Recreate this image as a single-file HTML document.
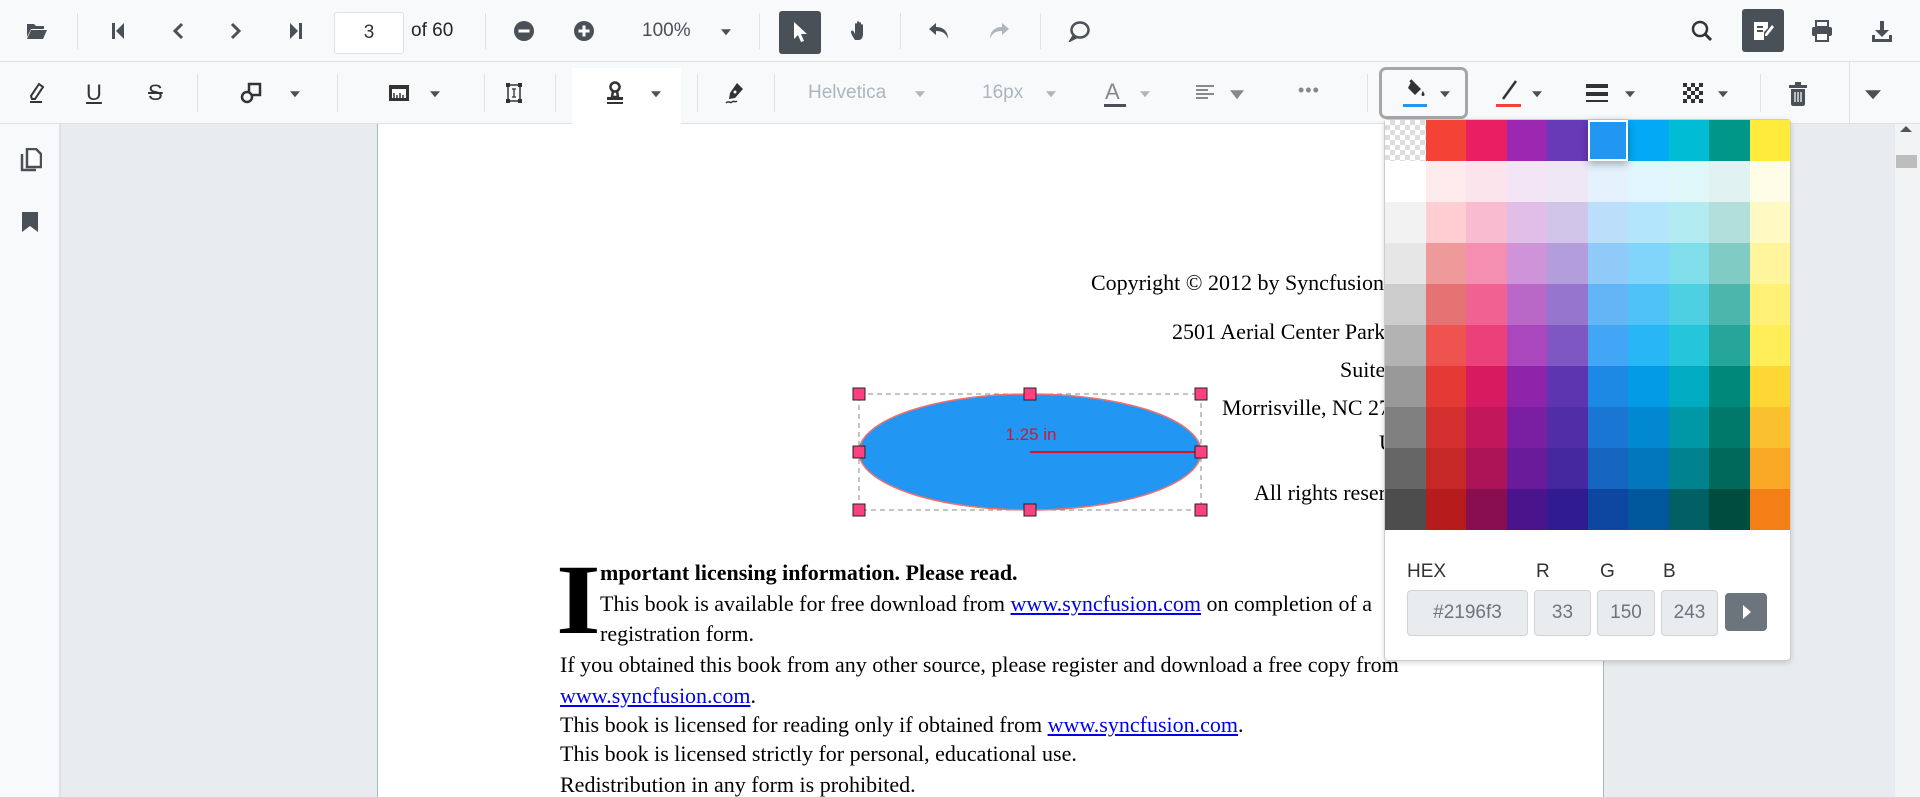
<!DOCTYPE html>
<html><head><meta charset="utf-8"><style>
*{margin:0;padding:0;box-sizing:border-box}
body{width:1920px;height:797px;overflow:hidden;background:#e9ecef;font-family:"Liberation Sans",sans-serif;position:relative}
.abs{position:absolute}
.tb{position:absolute;left:0;width:1920px;background:#f8f9fa;border-bottom:1px solid #dee2e6}
.sep{position:absolute;width:1px;background:#dee2e6}
.ic{position:absolute;transform:translate(-50%,-50%)}
.car{position:absolute;width:0;height:0;border-left:5px solid transparent;border-right:5px solid transparent;border-top:6px solid #495057;transform:translate(-50%,-30%)}
.car.l{border-top-color:#adb5bd}
.doc{position:absolute;font-family:"Liberation Serif",serif;font-size:22px;color:#000;white-space:nowrap;line-height:1}
a{color:#0000ee;text-decoration:underline}
.h{position:absolute;width:13px;height:13px;background:#ff4081;border:1.5px solid #222;transform:translate(-50%,-50%)}
.pal{position:absolute;left:1385px;top:120px;display:grid;grid-template-columns:repeat(10,40.5px);grid-auto-rows:41px}
.inp{position:absolute;top:590px;height:46px;background:#e9ecef;border:1.5px solid #ced4da;border-radius:4px;color:#6c757d;font-size:19px;text-align:center;line-height:43px}
.lab{position:absolute;top:558px;font-size:19px;color:#333}
</style></head><body>

<!-- toolbar 1 -->
<div class="tb" style="top:0;height:62px"></div>
<div class="sep" style="left:77px;top:13px;height:36px"></div>
<div class="sep" style="left:485px;top:13px;height:36px"></div>
<div class="sep" style="left:759px;top:13px;height:36px"></div>
<div class="sep" style="left:900px;top:13px;height:36px"></div>
<div class="sep" style="left:1040px;top:13px;height:36px"></div>

<svg class="ic" style="left:37px;top:31px" width="22" height="18" viewBox="0 0 22 18"><path d="M1 2h7l2 2h8v3H5L1 15z" fill="#495057"/><path d="M5 8h16l-4 9H1z" fill="#495057"/></svg>
<svg class="ic" style="left:118px;top:31px" width="14" height="18" viewBox="0 0 14 18"><rect x="1" y="1" width="3" height="16" fill="#495057"/><path d="M13 1v16L5 9z" fill="#495057"/></svg>
<svg class="ic" style="left:178px;top:31px" width="12" height="18" viewBox="0 0 12 18"><path d="M10 2L3 9l7 7" stroke="#495057" stroke-width="3" fill="none"/></svg>
<svg class="ic" style="left:236px;top:31px" width="12" height="18" viewBox="0 0 12 18"><path d="M2 2l7 7-7 7" stroke="#495057" stroke-width="3" fill="none"/></svg>
<svg class="ic" style="left:296px;top:31px" width="14" height="18" viewBox="0 0 14 18"><path d="M1 1v16l8-8z" fill="#495057"/><rect x="10" y="1" width="3" height="16" fill="#495057"/></svg>
<div class="abs" style="left:334px;top:12px;width:70px;height:42px;background:#fff;border:1px solid #dee2e6;border-radius:3px;text-align:center;line-height:40px;font-size:19px;color:#333">3</div>
<div class="abs" style="left:411px;top:20px;font-size:19px;color:#212529">of 60</div>
<svg class="ic" style="left:524px;top:31px" width="22" height="22"><circle cx="11" cy="11" r="10" fill="#495057"/><rect x="5.5" y="9.5" width="11" height="3" fill="#fff"/></svg>
<svg class="ic" style="left:584px;top:31px" width="22" height="22"><circle cx="11" cy="11" r="10" fill="#495057"/><rect x="5.5" y="9.5" width="11" height="3" fill="#fff"/><rect x="9.5" y="5.5" width="3" height="11" fill="#fff"/></svg>
<div class="abs" style="left:642px;top:20px;font-size:19px;color:#495057">100%</div>
<div class="car" style="left:726px;top:31px"></div>
<div class="abs" style="left:779px;top:11px;width:42px;height:43px;background:#495057;border-radius:3px"></div>
<svg class="ic" style="left:800px;top:32px" width="16" height="22" viewBox="0 0 16 22"><path d="M2 1v17l4-4 3 7 3-1-3-7h6z" fill="#fff"/></svg>
<svg class="ic" style="left:861px;top:31px" width="20" height="22" viewBox="0 0 20 22"><path d="M4 20c-2-3-4-6-4-8s2-2 3 0l1 2V4c0-1 2-1 2 0v7V2c0-1 2-1 2 0v9V3c0-1 2-1 2 0v8V5c0-1 2-1 2 0v9c0 4-2 6-4 6z" fill="#495057"/></svg>
<svg class="ic" style="left:939px;top:31px" width="22" height="18" viewBox="0 0 22 18"><path d="M8 1L1 7l7 6V9c6 0 10 2 12 8 0-7-4-12-12-12z" fill="#495057"/></svg>
<svg class="ic" style="left:999px;top:31px" width="22" height="18" viewBox="0 0 22 18"><path d="M14 1l7 6-7 6V9C8 9 4 11 2 17c0-7 4-12 12-12z" fill="#adb5bd"/></svg>
<svg class="ic" style="left:1079px;top:31px" width="22" height="22" viewBox="0 0 22 22"><ellipse cx="12" cy="10" rx="8.5" ry="7.5" stroke="#495057" stroke-width="2.5" fill="none"/><path d="M6 15l-3 5 6-3" stroke="#495057" stroke-width="2.5" fill="none"/></svg>
<svg class="ic" style="left:1702px;top:31px" width="22" height="22" viewBox="0 0 22 22"><circle cx="9" cy="9" r="7" stroke="#333" stroke-width="2.5" fill="none"/><path d="M14 14l6 6" stroke="#333" stroke-width="3"/></svg>
<div class="abs" style="left:1742px;top:9px;width:42px;height:43px;background:#495057;border-radius:3px"></div>
<svg class="ic" style="left:1763px;top:31px" width="22" height="22" viewBox="0 0 22 22"><path d="M2 2h14v6l-4 4v8H2z" fill="#fff"/><rect x="5" y="6" width="6" height="2" fill="#495057"/><rect x="5" y="10" width="6" height="2" fill="#495057"/><path d="M13 14l7-9 2 2-7 9h-2z" fill="#fff"/></svg>
<svg class="ic" style="left:1822px;top:31px" width="22" height="22" viewBox="0 0 22 22"><rect x="5" y="1" width="12" height="6" stroke="#495057" stroke-width="2" fill="none"/><rect x="1" y="7" width="20" height="9" rx="2" fill="#495057"/><rect x="5" y="13" width="12" height="8" fill="#fff" stroke="#495057" stroke-width="2"/></svg>
<svg class="ic" style="left:1882px;top:31px" width="22" height="22" viewBox="0 0 22 22"><rect x="9" y="1" width="4" height="10" fill="#495057"/><path d="M4 10h14l-7 7z" fill="#495057"/><rect x="1" y="19" width="20" height="3" fill="#495057"/><rect x="1" y="15" width="3" height="6" fill="#495057"/><rect x="18" y="15" width="3" height="6" fill="#495057"/></svg>

<!-- toolbar 2 -->
<div class="tb" style="top:62px;height:62px"></div>
<div class="sep" style="left:197px;top:74px;height:38px"></div>
<div class="sep" style="left:337px;top:74px;height:38px"></div>
<div class="sep" style="left:484px;top:74px;height:38px"></div>
<div class="sep" style="left:555px;top:74px;height:38px"></div>
<div class="sep" style="left:697px;top:74px;height:38px"></div>
<div class="sep" style="left:774px;top:74px;height:38px"></div>
<div class="sep" style="left:1367px;top:74px;height:38px"></div>
<div class="sep" style="left:1760px;top:74px;height:38px"></div>
<div class="sep" style="left:1849px;top:62px;height:62px"></div>
<div class="abs" style="left:572px;top:68px;width:109px;height:56px;background:#fff"></div>

<svg class="ic" style="left:37px;top:93px" width="16" height="22" viewBox="0 0 16 22"><path d="M10 2l4 3-8 12H3l-1-3z" stroke="#333" stroke-width="2" fill="none"/><rect x="1" y="19" width="12" height="2" fill="#333"/></svg>
<div class="abs" style="left:86px;top:80px;font-size:22px;color:#333;text-decoration:underline">U</div>
<div class="abs" style="left:148px;top:80px;font-size:22px;color:#333;text-decoration:line-through">S</div>
<svg class="ic" style="left:251px;top:93px" width="22" height="22" viewBox="0 0 22 22"><rect x="9" y="2" width="11" height="11" stroke="#333" stroke-width="2.5" fill="none"/><circle cx="7" cy="15" r="5" stroke="#333" stroke-width="2.5" fill="#f8f9fa"/></svg>
<div class="car" style="left:295px;top:93px"></div>
<svg class="ic" style="left:399px;top:93px" width="22" height="18" viewBox="0 0 22 18"><rect x="1" y="1" width="20" height="16" fill="#333"/><rect x="4" y="5" width="14" height="9" fill="#fff"/><path d="M6 14V9M9 14v-3M12 14V9M15 14v-3" stroke="#333" stroke-width="1.5"/></svg>
<div class="car" style="left:435px;top:93px"></div>
<svg class="ic" style="left:514px;top:93px" width="18" height="22" viewBox="0 0 18 22"><rect x="3" y="3" width="12" height="16" stroke="#333" stroke-width="1.5" fill="none"/><rect x="1" y="1" width="4" height="4" fill="#333"/><rect x="13" y="1" width="4" height="4" fill="#333"/><rect x="1" y="17" width="4" height="4" fill="#333"/><rect x="13" y="17" width="4" height="4" fill="#333"/><path d="M7 7h4M9 7v8M7 15h4" stroke="#333" stroke-width="1.3"/></svg>
<svg class="ic" style="left:615px;top:93px" width="20" height="24" viewBox="0 0 20 24"><circle cx="10" cy="6" r="4.5" stroke="#333" stroke-width="2.5" fill="none"/><path d="M8 10l-1 6h6l-1-6" stroke="#333" stroke-width="2.5" fill="none"/><rect x="2" y="16" width="16" height="3" fill="#333"/><rect x="2" y="21" width="16" height="2" fill="#333"/></svg>
<div class="car" style="left:656px;top:93px"></div>
<svg class="ic" style="left:735px;top:93px" width="24" height="24" viewBox="0 0 24 24"><path d="M14 2l6 6-8 9-6 1 1-6z" fill="#333"/><circle cx="12" cy="11" r="1.5" fill="#fff"/><path d="M3 22c3-3 4 1 6-1s3 1 5-1" stroke="#333" stroke-width="1.5" fill="none"/></svg>
<div class="abs" style="left:808px;top:82px;font-size:19px;color:#adb5bd">Helvetica</div>
<div class="car l" style="left:920px;top:93px"></div>
<div class="abs" style="left:982px;top:82px;font-size:19px;color:#adb5bd">16px</div>
<div class="car l" style="left:1051px;top:93px"></div>
<div class="abs" style="left:1105px;top:79px;font-size:22px;color:#888">A</div>
<div class="abs" style="left:1104px;top:104px;width:22px;height:3px;background:#495057"></div>
<div class="car l" style="left:1145px;top:93px"></div>
<svg class="ic" style="left:1205px;top:93px" width="18" height="18" viewBox="0 0 18 18"><path d="M0 2h18M0 6h12M0 10h18M0 14h12" stroke="#888" stroke-width="2"/></svg>
<div class="car" style="left:1237px;top:93px;border-top-color:#888;border-left-width:7px;border-right-width:7px;border-top-width:9px"></div>
<div class="abs" style="left:1298px;top:80px;font-size:18px;color:#888;letter-spacing:1px">•••</div>
<div class="abs" style="left:1379px;top:67px;width:89px;height:52px;border:3.5px solid #a6a6a6;border-radius:7px"></div>
<svg class="ic" style="left:1416px;top:89px" width="22" height="22" viewBox="0 0 22 22"><path d="M7 2l9 9-6 6-7-7z" fill="#333"/><path d="M5 4l2-2" stroke="#333" stroke-width="2"/><path d="M18 13c2 3 2 5 0 5s-2-2 0-5z" fill="#333"/></svg>
<div class="abs" style="left:1403px;top:104px;width:24px;height:3px;background:#2196f3"></div>
<div class="car" style="left:1445px;top:93px"></div>
<svg class="ic" style="left:1509px;top:90px" width="20" height="22" viewBox="0 0 20 22"><path d="M17 2L4 20" stroke="#333" stroke-width="2.5"/></svg>
<div class="abs" style="left:1496px;top:104px;width:25px;height:3px;background:#f44336"></div>
<div class="car" style="left:1537px;top:93px"></div>
<svg class="ic" style="left:1597px;top:93px" width="22" height="20" viewBox="0 0 22 20"><rect x="0" y="1" width="22" height="4" fill="#333"/><rect x="0" y="9" width="22" height="4" fill="#333"/><rect x="0" y="17" width="22" height="2" fill="#333"/></svg>
<div class="car" style="left:1630px;top:93px"></div>
<svg class="ic" style="left:1693px;top:93px" width="20" height="20" viewBox="0 0 20 20"><g fill="#333"><rect x="0" y="0" width="4" height="4"/><rect x="8" y="0" width="4" height="4"/><rect x="16" y="0" width="4" height="4"/><rect x="4" y="4" width="4" height="4"/><rect x="12" y="4" width="4" height="4"/><rect x="0" y="8" width="4" height="4"/><rect x="8" y="8" width="4" height="4"/><rect x="16" y="8" width="4" height="4"/><rect x="4" y="12" width="4" height="4"/><rect x="12" y="12" width="4" height="4"/><rect x="0" y="16" width="4" height="4"/><rect x="8" y="16" width="4" height="4"/><rect x="16" y="16" width="4" height="4"/></g></svg>
<div class="car" style="left:1723px;top:93px"></div>
<svg class="ic" style="left:1798px;top:94px" width="20" height="24" viewBox="0 0 20 24"><rect x="1" y="3" width="18" height="3" fill="#495057"/><rect x="7" y="0" width="6" height="3" fill="#495057"/><path d="M3 7h14v15c0 1-1 2-2 2H5c-1 0-2-1-2-2z" fill="#495057"/><path d="M7 10v10M10 10v10M13 10v10" stroke="#f8f9fa" stroke-width="1.3"/></svg>
<div class="car" style="left:1873px;top:93px;border-left-width:8px;border-right-width:8px;border-top-width:9px"></div>

<!-- sidebar -->
<div class="abs" style="left:0;top:124px;width:61px;height:673px;background:#f8f9fa;border-right:2px solid #dee2e6"></div>
<svg class="ic" style="left:31px;top:160px" width="22" height="24" viewBox="0 0 22 24"><path d="M7 1h9l5 5v13H7z" stroke="#495057" stroke-width="2.5" fill="#fff"/><path d="M2 6v16h14" stroke="#495057" stroke-width="2.5" fill="none"/></svg>
<svg class="ic" style="left:30px;top:222px" width="18" height="22" viewBox="0 0 18 22"><path d="M1 1h16v20l-8-6-8 6z" fill="#495057"/></svg>

<!-- page -->
<div class="abs" style="left:377px;top:124px;width:1227px;height:673px;background:#fff;border-left:1.5px solid #adb5bd;border-right:1.5px solid #adb5bd"></div>

<div class="doc" style="left:1091px;top:272px">Copyright © 2012 by Syncfusion Inc.</div>
<div class="doc" style="left:1172px;top:321px">2501 Aerial Center Parkway</div>
<div class="doc" style="left:1340px;top:359px">Suite 200</div>
<div class="doc" style="left:1222px;top:397px">Morrisville, NC 27560</div>
<div class="doc" style="left:1379px;top:432px">USA</div>
<div class="doc" style="left:1254px;top:482px">All rights reserved.</div>

<svg class="abs" style="left:850px;top:385px" width="360" height="135">
<rect x="9" y="9" width="342" height="116" stroke="#888" stroke-dasharray="5,4" fill="none"/>
<ellipse cx="180" cy="67" rx="171" ry="58" fill="#2196f3" stroke="#f07070" stroke-width="1.5"/>
<path d="M180 67H351" stroke="#e0102a" stroke-width="2"/>
<text x="181" y="55" font-family="Liberation Sans" font-size="17" fill="#e0102a" text-anchor="middle">1.25 in</text>
</svg>
<div class="h" style="left:859px;top:394px"></div><div class="h" style="left:1030px;top:394px"></div><div class="h" style="left:1201px;top:394px"></div>
<div class="h" style="left:859px;top:452px"></div><div class="h" style="left:1201px;top:452px"></div>
<div class="h" style="left:859px;top:510px"></div><div class="h" style="left:1030px;top:510px"></div><div class="h" style="left:1201px;top:510px"></div>

<div class="doc" style="left:556px;top:550px;font-size:100px;font-weight:bold;line-height:100px;transform:scaleX(1.15);transform-origin:left">I</div>
<div class="doc" style="left:600px;top:562px;font-weight:bold">mportant licensing information. Please read.</div>
<div class="doc" style="left:600px;top:593px">This book is available for free download from <a>www.syncfusion.com</a> on completion of a</div>
<div class="doc" style="left:600px;top:623px">registration form.</div>
<div class="doc" style="left:560px;top:654px">If you obtained this book from any other source, please register and download a free copy from</div>
<div class="doc" style="left:560px;top:685px"><a>www.syncfusion.com</a>.</div>
<div class="doc" style="left:560px;top:714px">This book is licensed for reading only if obtained from <a>www.syncfusion.com</a>.</div>
<div class="doc" style="left:560px;top:743px">This book is licensed strictly for personal, educational use.</div>
<div class="doc" style="left:560px;top:774px">Redistribution in any form is prohibited.</div>

<!-- scrollbar -->
<div class="abs" style="left:1894px;top:124px;width:26px;height:673px;background:#f1f3f5;border-left:1px solid #e5e7ea"></div>
<div class="abs" style="left:1900px;top:126px;width:0;height:0;border-left:6px solid transparent;border-right:6px solid transparent;border-bottom:6px solid #555"></div>
<div class="abs" style="left:1896px;top:155px;width:21px;height:13px;background:#bdbdbd"></div>

<!-- color popup -->
<div class="abs" style="left:1384px;top:119px;width:407px;height:542px;background:#fff;border:1.5px solid #ccc;border-radius:4px;box-shadow:0 2px 6px rgba(0,0,0,.15)"></div>
<div class="pal">
<div style="background:repeating-conic-gradient(#ddd 0 25%,#fff 0 50%) 0 0/10px 10px"></div><div style="background:#f44336"></div><div style="background:#e91e63"></div><div style="background:#9c27b0"></div><div style="background:#673ab7"></div><div style="background:#2196f3;border:2px solid #fff;box-shadow:0 3px 8px rgba(0,0,0,.3);position:relative;z-index:2"></div><div style="background:#03a9f4"></div><div style="background:#00bcd4"></div><div style="background:#009688"></div><div style="background:#ffeb3b"></div>
<div style="background:#ffffff"></div><div style="background:#ffebee"></div><div style="background:#fce4ec"></div><div style="background:#f3e5f5"></div><div style="background:#ede7f6"></div><div style="background:#e3f2fd"></div><div style="background:#e1f5fe"></div><div style="background:#e0f7fa"></div><div style="background:#e0f2f1"></div><div style="background:#fffde7"></div>
<div style="background:#f2f2f2"></div><div style="background:#ffcdd2"></div><div style="background:#f8bbd0"></div><div style="background:#e1bee7"></div><div style="background:#d1c4e9"></div><div style="background:#bbdefb"></div><div style="background:#b3e5fc"></div><div style="background:#b2ebf2"></div><div style="background:#b2dfdb"></div><div style="background:#fff9c4"></div>
<div style="background:#e6e6e6"></div><div style="background:#ef9a9a"></div><div style="background:#f48fb1"></div><div style="background:#ce93d8"></div><div style="background:#b39ddb"></div><div style="background:#90caf9"></div><div style="background:#81d4fa"></div><div style="background:#80deea"></div><div style="background:#80cbc4"></div><div style="background:#fff59d"></div>
<div style="background:#cccccc"></div><div style="background:#e57373"></div><div style="background:#f06292"></div><div style="background:#ba68c8"></div><div style="background:#9575cd"></div><div style="background:#64b5f6"></div><div style="background:#4fc3f7"></div><div style="background:#4dd0e1"></div><div style="background:#4db6ac"></div><div style="background:#fff176"></div>
<div style="background:#b3b3b3"></div><div style="background:#ef5350"></div><div style="background:#ec407a"></div><div style="background:#ab47bc"></div><div style="background:#7e57c2"></div><div style="background:#42a5f5"></div><div style="background:#29b6f6"></div><div style="background:#26c6da"></div><div style="background:#26a69a"></div><div style="background:#ffee58"></div>
<div style="background:#999999"></div><div style="background:#e53935"></div><div style="background:#d81b60"></div><div style="background:#8e24aa"></div><div style="background:#5e35b1"></div><div style="background:#1e88e5"></div><div style="background:#039be5"></div><div style="background:#00acc1"></div><div style="background:#00897b"></div><div style="background:#fdd835"></div>
<div style="background:#808080"></div><div style="background:#d32f2f"></div><div style="background:#c2185b"></div><div style="background:#7b1fa2"></div><div style="background:#512da8"></div><div style="background:#1976d2"></div><div style="background:#0288d1"></div><div style="background:#0097a7"></div><div style="background:#00796b"></div><div style="background:#fbc02d"></div>
<div style="background:#666666"></div><div style="background:#c62828"></div><div style="background:#ad1457"></div><div style="background:#6a1b9a"></div><div style="background:#4527a0"></div><div style="background:#1565c0"></div><div style="background:#0277bd"></div><div style="background:#00838f"></div><div style="background:#00695c"></div><div style="background:#f9a825"></div>
<div style="background:#4d4d4d"></div><div style="background:#b71c1c"></div><div style="background:#880e4f"></div><div style="background:#4a148c"></div><div style="background:#311b92"></div><div style="background:#0d47a1"></div><div style="background:#01579b"></div><div style="background:#006064"></div><div style="background:#004d40"></div><div style="background:#f57f17"></div>
</div>
<div class="lab" style="left:1407px;top:561px">HEX</div>
<div class="lab" style="left:1536px;top:561px">R</div>
<div class="lab" style="left:1600px;top:561px">G</div>
<div class="lab" style="left:1663px;top:561px">B</div>
<div class="inp" style="left:1407px;width:121px;top:590px">#2196f3</div>
<div class="inp" style="left:1534px;width:57px;top:590px">33</div>
<div class="inp" style="left:1597px;width:58px;top:590px">150</div>
<div class="inp" style="left:1661px;width:57px;top:590px">243</div>
<div class="abs" style="left:1725px;top:593px;width:42px;height:38px;background:#6c757d;border-radius:4px"></div>
<div class="abs" style="left:1743px;top:605px;width:0;height:0;border-top:7px solid transparent;border-bottom:7px solid transparent;border-left:8px solid #fff"></div>
</body></html>
